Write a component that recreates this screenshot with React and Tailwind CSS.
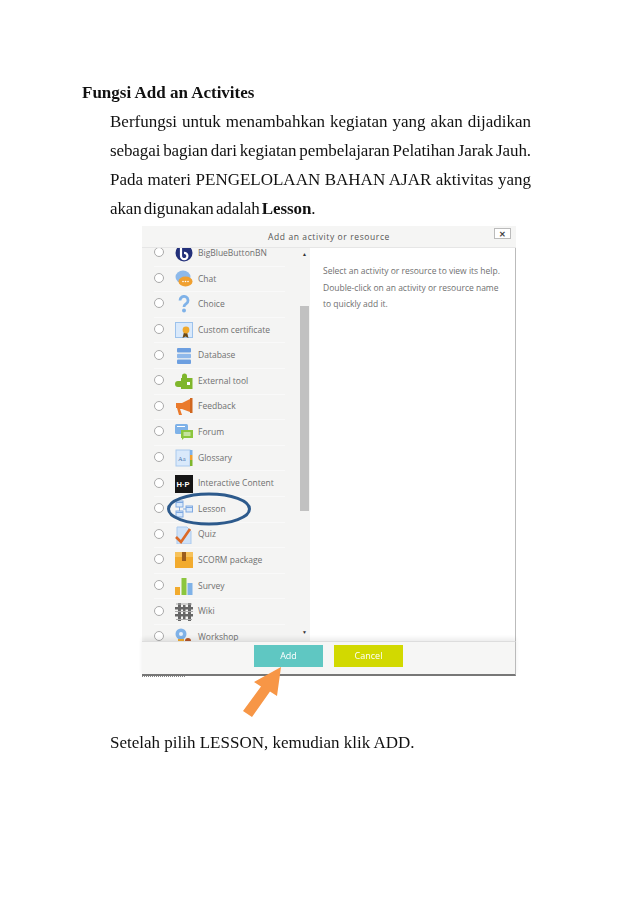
const icons = {
  BigBlueButtonBN: (
    <svg viewBox="0 0 18 18" className="w-[18px] h-[18px]">
      <circle cx="9" cy="9" r="8.5" fill="#23307a" />
      <path d="M6 3v9a3.2 3.2 0 1 0 3-3.2" fill="none" stroke="#fff" strokeWidth="2.2" />
    </svg>
  ),
  Chat: (
    <svg viewBox="0 0 18 18" className="w-[18px] h-[18px]">
      <ellipse cx="8" cy="7" rx="7.5" ry="6.5" fill="#8db9ea" />
      <ellipse cx="10.5" cy="11.5" rx="7" ry="5" fill="#f0a030" />
      <circle cx="8" cy="11.5" r=".8" fill="#fff" /><circle cx="10.5" cy="11.5" r=".8" fill="#fff" /><circle cx="13" cy="11.5" r=".8" fill="#fff" />
    </svg>
  ),
  Choice: (
    <svg viewBox="0 0 18 18" className="w-[18px] h-[18px]">
      <path d="M5 5.5a4 4 0 1 1 6.3 3.2C10 9.700 9 10 9 12" fill="none" stroke="#7fb2e8" strokeWidth="2.800" />
      <circle cx="9" cy="15.500" r="2" fill="#7fb2e8" />
    </svg>
  ),
  "Custom certificate": (
    <svg viewBox="0 0 18 18" className="w-[18px] h-[18px]">
      <rect x=".5" y="1.500" width="17" height="15" fill="#d9e9fb" stroke="#9cc2ec" />
      <path d="M9 11l-1.500 6 3-1.500 3 1.500-1.500-6z" fill="#6b4a18" />
      <circle cx="11" cy="9" r="3.400" fill="#f0a92d" />
    </svg>
  ),
  Database: (
    <svg viewBox="0 0 18 18" className="w-[18px] h-[18px]">
      <rect x="2" y="1" width="14" height="4.500" rx="1" fill="#6d9fe0" />
      <rect x="2" y="6.700" width="14" height="4.500" rx="1" fill="#8fb8ea" />
      <rect x="2" y="12.500" width="14" height="4.500" rx="1" fill="#6d9fe0" />
    </svg>
  ),
  "External tool": (
    <svg viewBox="0 0 18 18" className="w-[18px] h-[18px]">
      <path d="M7 4a2.500 2.500 0 1 1 5 0v2h5.500v11H6v-2H3a3 3 0 1 1 0-6h3V6h1z" fill="#7fb62c" />
      <rect x="12" y="10" width="3" height="3" fill="#fff" />
    </svg>
  ),
  Feedback: (
    <svg viewBox="0 0 18 18" className="w-[18px] h-[18px]">
      <path d="M1 5h6l8-4v13l-8-3H5l2 6H4L2 10H1z" fill="#ea7a2c" />
      <rect x="15" y="0" width="2.500" height="15" fill="#d0671f" />
    </svg>
  ),
  Forum: (
    <svg viewBox="0 0 18 18" className="w-[18px] h-[18px]">
      <rect x="0" y="1" width="13" height="10" rx="1.500" fill="#7fb2e8" />
      <path d="M6 7h12v8H9l-2 2v-2H6z" fill="#8cc63f" />
      <path d="M8.500 10h7M8.500 12h7M2 3.500h8" stroke="#fff" strokeWidth="1" />
    </svg>
  ),
  Glossary: (
    <svg viewBox="0 0 18 18" className="w-[18px] h-[18px]">
      <rect x="1" y="1" width="14" height="16" fill="#d9e9fb" stroke="#a9c9ee" />
      <rect x="15" y="1" width="2.500" height="5" fill="#7fb2e8" />
      <rect x="15" y="6" width="2.500" height="5" fill="#f0a030" />
      <rect x="15" y="11" width="2.500" height="6" fill="#7fb62c" />
      <text x="3" y="12" fontSize="6.500" fill="#4a78b0" fontFamily="Liberation Serif, serif">Aa</text>
    </svg>
  ),
  "Interactive Content": (
    <svg viewBox="0 0 18 18" className="w-[18px] h-[18px]">
      <rect width="18" height="18" fill="#151515" />
      <text x="1.500" y="12" fontSize="7.500" fontWeight="700" fill="#fff" fontFamily="Liberation Sans, sans-serif">H·P</text>
    </svg>
  ),
  Lesson: (
    <svg viewBox="0 0 18 18" className="w-[18px] h-[18px]">
      <g fill="#d9e9fb" stroke="#7fa9e2" strokeWidth="1">
        <rect x="1" y="1" width="7" height="6" />
        <rect x="11" y="6" width="6.500" height="6" />
        <rect x="1" y="11" width="7" height="6" />
      </g>
      <path d="M1 2.500h7M11 7.500h6.500M1 12.500h7M8 9h3M4.500 7v4" stroke="#7fa9e2" strokeWidth="1" />
    </svg>
  ),
  Quiz: (
    <svg viewBox="0 0 18 18" className="w-[18px] h-[18px]">
      <path d="M2 1h10l4 4v13H2z" fill="#cfe2f8" stroke="#a9c9ee" />
      <path d="M1 11l5 5L15 3" fill="none" stroke="#dc6a28" strokeWidth="2.600" />
    </svg>
  ),
  "SCORM package": (
    <svg viewBox="0 0 18 18" className="w-[18px] h-[18px]">
      <rect x="0" y="1" width="18" height="16" fill="#f2ab2e" />
      <rect x="0" y="1" width="18" height="5" fill="#f7c25a" />
      <rect x="7" y="1" width="4" height="9" fill="#9a5c1d" />
    </svg>
  ),
  Survey: (
    <svg viewBox="0 0 18 18" className="w-[18px] h-[18px]">
      <rect x="0" y="10" width="5" height="8" fill="#f2ab2e" />
      <rect x="6.500" y="1" width="5" height="17" fill="#8cc63f" />
      <rect x="12.500" y="6" width="5" height="12" fill="#7fb2e8" />
    </svg>
  ),
  Wiki: (
    <svg viewBox="0 0 18 18" className="w-[18px] h-[18px]">
      <g fill="#666">
        <rect x="0" y="4" width="18" height="2.500" /><rect x="0" y="11" width="18" height="2.500" />
        <rect x="3" y="0" width="3" height="18" /><rect x="8" y="2" width="2.500" height="14" /><rect x="13" y="0" width="3" height="18" />
      </g>
      <path d="M0 8.500h18M1 1h16M1 16.500h16" stroke="#aaa" strokeWidth="1" />
    </svg>
  ),
  Workshop: (
    <svg viewBox="0 0 18 18" className="w-[18px] h-[18px]">
      <circle cx="6" cy="6" r="5.500" fill="#7fb2e8" />
      <circle cx="6" cy="6" r="2" fill="#e8f1fb" />
      <rect x="3" y="11" width="6" height="7" fill="#f2ab2e" />
      <path d="M10 18v-5a3 3 0 0 1 6 0v5z" fill="#b5562a" />
    </svg>
  ),
};

const names = Object.keys(icons);

const lineCls = "block [text-align-last:justify]";

export default function App() {
  return (
    <div className="w-[638px] h-[905px] bg-white overflow-hidden pt-[82px] [font-family:'Liberation_Serif',serif] text-[#111]">
      <h1 className="ml-[82px] text-[17px] leading-[22px] font-bold blur-[0.25px]">Fungsi Add an Activites</h1>
      <div className="ml-[110px] w-[421px] mt-[3px] text-[17px] leading-[29px] blur-[0.25px]">
        <p className={lineCls}>Berfungsi untuk menambahkan kegiatan yang akan dijadikan</p>
        <p className={`${lineCls} [word-spacing:-2.500px] tracking-[-0.1px] whitespace-nowrap`}>sebagai bagian dari kegiatan pembelajaran Pelatihan Jarak Jauh.</p>
        <p className={lineCls}>Pada materi PENGELOLAAN BAHAN AJAR aktivitas yang</p>
        <p className="[word-spacing:-2px] tracking-[-0.1px]">akan digunakan adalah <b>Lesson</b>.</p>
      </div>

      <div className="relative ml-[142px] mt-[3px] w-[374px] h-[450px] bg-white blur-[0.5px] [font-family:'Open_Sans',sans-serif] text-[#707070]">
        <div className="h-[22px] pt-px bg-[#f5f5f4] border-b border-[#e6e6e6] flex items-center justify-center text-[8.500px] tracking-[0.6px] text-[#555]">
          Add an activity or resource
        </div>
        <div className="absolute right-[5px] top-[2px] w-[17px] h-[11px] border border-[#bbb] bg-white flex items-center justify-center text-[8px] font-bold leading-none text-[#444]">✕</div>

        <div className="flex h-[393px] border-r border-[#bbb]">
          <div className="w-[168px] h-full flex bg-[#f4f4f3] overflow-hidden">
            <div className="w-[157px] h-full overflow-hidden">
              <div className="-mt-[7px] pl-[12px]">
                {names.map((n) => (
                  <div key={n} className="h-[25.600px] w-[131px] flex items-center border-b border-[#f9f9f9]">
                    <span className="w-[10px] h-[10px] mb-[2px] rounded-full border border-[#aaa] bg-white shrink-0" />
                    <span className="ml-[11px] w-[18px] h-[18px] shrink-0">{icons[n]}</span>
                    <span className="ml-[5px] text-[8.500px] whitespace-nowrap">{n}</span>
                  </div>
                ))}
              </div>
            </div>
            <div className="w-[11px] h-full flex flex-col">
              <div className="h-[14px] flex items-center justify-center text-[5px] text-[#333]">▲</div>
              <div className="mt-[44px] h-[205px] mx-[1px] bg-[#c1c1c1]" />
              <div className="flex-1 flex items-end justify-center pb-[5px] text-[5px] text-[#333]">▼</div>
            </div>
          </div>
          <div className="flex-1 pl-[13px] pt-[15px] text-[8.500px] leading-[16.500px]">
            <p>Select an activity or resource to view its help.</p>
            <p>Double-click on an activity or resource name</p>
            <p>to quickly add it.</p>
          </div>
        </div>

        <div className="relative h-[35px] bg-[#f6f6f5] border-t border-[#ddd] border-r border-r-[#bbb] border-b-2 border-b-[#777] shadow-[0_-3px_4px_rgba(0,0,0,0.07)] flex items-start justify-center gap-[11px] pt-[3px] text-[9px] font-medium text-white">
          <div className="w-[69px] h-[22px] bg-[#5fc7c2] flex items-center justify-center">Add</div>
          <div className="w-[69px] h-[22px] bg-[#d2d900] flex items-center justify-center">Cancel</div>
        </div>
        <div className="absolute left-0 top-[450px] w-[43px] border-t border-dotted border-[#888]" />

        <svg viewBox="0 0 90 40" className="absolute left-[25px] top-[278px] w-[90px] h-[40px] pointer-events-none overflow-visible">
          <ellipse cx="42" cy="5" rx="40.500" ry="15" fill="none" stroke="#2d5a8c" strokeWidth="3" />
        </svg>
        <svg viewBox="0 0 44 52" className="absolute left-[100px] top-[440px] w-[44px] h-[52px] overflow-visible">
          <path d="M39 1L35 30 28 25.500 10 51 1 45 19 20.500 12 16z" fill="#f79646" />
        </svg>
      </div>

      <p className="ml-[110px] mt-[56px] text-[17px] leading-[22px] blur-[0.25px]">Setelah pilih LESSON, kemudian klik ADD.</p>
    </div>
  );
}
